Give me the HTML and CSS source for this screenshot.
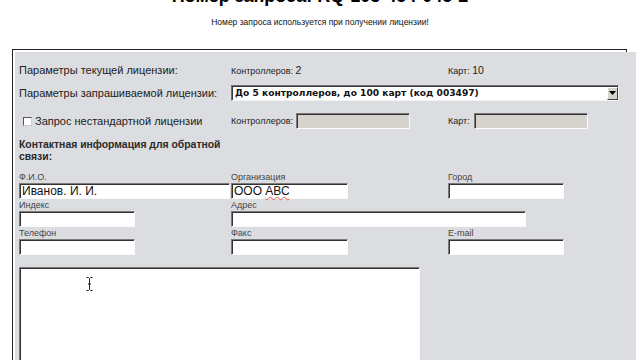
FILE: index.html
```html
<!DOCTYPE html>
<html>
<head>
<meta charset="utf-8">
<link rel="stylesheet" href="styles.css">
</head>
<body>
<h1 class="title">Номер запроса: RQ-103-454-045-2</h1>
<p class="note">Номер запроса используется при получении лицензии!</p>
<div class="frame">
  <div class="panel">
    <div class="row r1">
      <div class="lbl">Параметры текущей лицензии:</div>
      <div class="info">Контроллеров: <span class="num">2</span></div>
      <div class="info">Карт: <span class="num">10</span></div>
    </div>
    <div class="row r2">
      <div class="lbl">Параметры запрашиваемой лицензии:</div>
      <div class="select">
        <span class="sel-text">До 5 контроллеров, до 100 карт (код 003497)</span>
        <span class="sel-btn"><svg width="7" height="4" viewBox="0 0 7 4"><path d="M0 0H7L3.5 4Z" fill="#000"/></svg></span>
      </div>
    </div>
    <div class="row r3">
      <div class="chk-wrap"><span class="chk"></span><span class="lbl">Запрос нестандартной лицензии</span></div>
      <div class="pair p-ctrl"><span class="info">Контроллеров:</span><span class="inp dis w114"></span></div>
      <div class="pair p-card"><span class="info">Карт:</span><span class="inp dis w114"></span></div>
    </div>
    <div class="heading">Контактная информация для обратной<br>связи:</div>
    <div class="fields">
      <div class="field"><div class="flbl">Ф.И.О.</div><div class="inp w211">Иванов. И. И.</div></div>
      <div class="field"><div class="flbl">Организация</div><div class="inp w117">ООО <span class="spell">АВС</span></div></div>
      <div class="field"><div class="flbl">Город</div><div class="inp w116"></div></div>
      <div class="field"><div class="flbl">Индекс</div><div class="inp w116"></div></div>
      <div class="field span2"><div class="flbl">Адрес</div><div class="inp w295"></div></div>
      <div class="field"><div class="flbl">Телефон</div><div class="inp w116"></div></div>
      <div class="field"><div class="flbl">Факс</div><div class="inp w117"></div></div>
      <div class="field"><div class="flbl">E-mail</div><div class="inp w116"></div></div>
    </div>
    <div class="textarea">
      <svg class="ibeam" width="7" height="14" viewBox="0 0 7 14"><path d="M0.5 0.5H2.5L3.5 1.5L4.5 0.5H6.5M3.5 1.5V12.5M0.5 13.5H2.5L3.5 12.5L4.5 13.5H6.5M2 7H5" stroke="#222" stroke-width="1" fill="none"/></svg>
    </div>
  </div>
</div>
</body>
</html>
```
FILE: styles.css
```css
html, body {
  margin: 0;
  padding: 0;
  background: #fff;
}
body {
  font-family: "Liberation Sans", Arial, sans-serif;
  color: #1a1a1a;
  overflow: hidden;
  width: 640px;
  height: 360px;
}
.title {
  margin: -14px 0 0 0;
  height: 20px;
  font-size: 18px;
  line-height: 20px;
  font-weight: bold;
  text-align: center;
  color: #000;
}
.note {
  margin: 11px 0 0 0;
  height: 10px;
  font-size: 8.5px;
  line-height: 10px;
  text-align: center;
  color: #111;
}
.frame {
  margin: 22px 0 0 12px;
  width: 613px;
  height: 310px;
  border: 1px solid #222;
  border-bottom: none;
}
.panel {
  margin: 2px 0 0 2px;
  width: 621px;
  height: 308px;
  background: #dcdde1;
  padding-top: 10px;
  box-sizing: border-box;
}
.row {
  display: grid;
  grid-template-columns: 212px 217px 1fr;
  align-items: center;
  padding-left: 4px;
}
.r1 { height: 16px; }
.r2 { height: 16px; margin-top: 7px; }
.r3 { height: 16px; margin-top: 12px; }
.lbl {
  font-size: 11px;
  color: #222;
  white-space: nowrap;
}
.info {
  font-size: 9px;
  color: #222;
  white-space: nowrap;
}
.num { font-size: 10.5px; }
.select {
  grid-column: 2 / 4;
  width: 388px;
  height: 16px;
  box-sizing: border-box;
  background: #fff;
  border: 1px solid;
  border-color: #6e6e6e #f4f4f4 #f4f4f4 #6e6e6e;
  box-shadow: inset 1px 1px 0 #3a3a3a;
  display: flex;
  align-items: center;
  justify-content: space-between;
  padding-left: 3px;
}
.sel-text {
  font-family: "DejaVu Sans", sans-serif;
  font-weight: bold;
  font-size: 9.1px;
  color: #111;
  white-space: nowrap;
}
.sel-btn {
  width: 11px;
  height: 13px;
  box-sizing: border-box;
  background: #d6d3ce;
  border: 1px solid;
  border-color: #fff #404040 #404040 #fff;
  display: flex;
  align-items: center;
  justify-content: center;
}
.chk-wrap {
  display: flex;
  align-items: center;
  padding-left: 4px;
}
.chk {
  width: 9px;
  height: 9px;
  box-sizing: border-box;
  background: #fff;
  border: 1px solid;
  border-color: #555 #ccc #ccc #555;
  margin-right: 3px;
}
.pair {
  display: flex;
  align-items: center;
}
.inp {
  height: 16px;
  box-sizing: border-box;
  background: #fff;
  border: 1px solid;
  border-color: #7a7a7a #fafafa #fafafa #7a7a7a;
  box-shadow: inset 1px 1px 0 #333;
  font-size: 12px;
  line-height: 14px;
  padding-left: 2px;
  color: #111;
  white-space: nowrap;
}
.dis {
  background: #d6d3ce;
}
.p-ctrl .dis { margin-left: 3px; }
.p-card .dis { margin-left: 4px; }
.w114 { width: 114px; }
.w116 { width: 116px; }
.w117 { width: 117px; }
.w211 { width: 211px; }
.w295 { width: 295px; }
.heading {
  margin-top: 10px;
  padding-left: 4px;
  font-size: 10.4px;
  line-height: 12px;
  font-weight: bold;
  color: #2a2a2a;
}
.fields {
  margin-top: 9px;
  padding-left: 4px;
  display: grid;
  grid-template-columns: 212px 217px 1fr;
  row-gap: 1px;
}
.field.span2 { grid-column: 2 / 4; }
.flbl {
  height: 11px;
  font-size: 9px;
  line-height: 11px;
  color: #444;
}
.spell {
  text-decoration: underline wavy #e05050;
  text-decoration-thickness: 1px;
}
.textarea {
  position: relative;
  margin: 12px 0 0 4px;
  width: 401px;
  height: 93px;
  box-sizing: border-box;
  background: #fff;
  border: 1px solid;
  border-color: #7a7a7a #fafafa #fafafa #7a7a7a;
  border-bottom: none;
  box-shadow: inset 1px 1px 0 #333;
}
.ibeam {
  position: absolute;
  left: 66px;
  top: 9px;
}
```
